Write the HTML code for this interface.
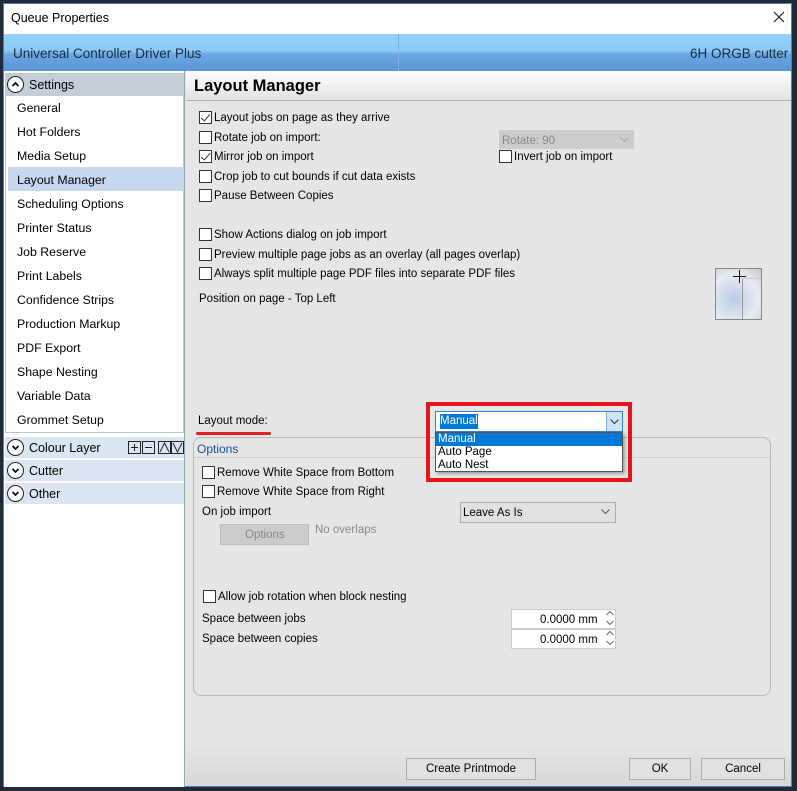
<!DOCTYPE html>
<html><head><meta charset="utf-8"><style>
*{margin:0;padding:0;box-sizing:border-box}
body{width:797px;height:791px;background:#1f2b3a;position:relative;overflow:hidden;font-family:"Liberation Sans",Tahoma,sans-serif;font-size:11.5px;color:#000}
.a{position:absolute}
.cb{position:absolute;width:13px;height:13px;border:1px solid #333;background:#fff}
.cb.c::after{content:"";position:absolute;left:3px;top:0px;width:4px;height:8px;border:solid #333;border-width:0 1.5px 1.5px 0;transform:rotate(40deg)}
.t{position:absolute;white-space:nowrap}
.li{position:absolute;left:17px;font-size:12.3px;white-space:nowrap}
.circ{position:absolute;width:17px;height:17px;border:1.5px solid #222;border-radius:50%;background:#fff}
.circ svg{position:absolute;left:2px;top:2px}
.btn{position:absolute;border:1px solid #adadad;background:#e1e1e1;text-align:center;font-size:11.5px;line-height:20px}
</style></head><body>
<div class="a" style="left:3px;top:3px;width:789px;height:784px;background:#e6e6e6;border:1px solid #5b7ea8"></div>
<div class="a" style="left:4px;top:4px;width:787px;height:30px;background:#fff"></div>
<div class="t" style="left:11px;top:11px;font-size:12.5px">Queue Properties</div>
<svg class="a" style="left:773px;top:11px" width="12" height="12"><path d="M1 1L11 11M11 1L1 11" stroke="#222" stroke-width="1.2"/></svg>
<div class="a" style="left:4px;top:34px;width:787px;height:37px;background:linear-gradient(#94d1fa 0%,#8ccaf5 45%,#6aa8e4 55%,#5b94d6 100%)"></div>
<div class="a" style="left:398px;top:34px;width:1px;height:37px;background:#7fb0e0"></div>
<div class="t" style="left:13px;top:46px;font-size:13.5px;color:#1a2a40">Universal Controller Driver Plus</div>
<div class="t" style="left:690px;top:46px;font-size:13.5px;color:#1a2a40">6H ORGB cutter</div>
<!-- left panel -->
<div class="a" style="left:4px;top:71px;width:181px;height:716px;background:#fff;border-right:1px solid #8aa"></div>
<div class="a" style="left:5px;top:73px;width:179px;height:360px;border:1px solid #b8c6d6;background:#fff"></div>
<div class="a" style="left:6px;top:74px;width:178px;height:22px;background:#c3ced9"></div>
<div class="circ" style="left:7px;top:76px"><svg width="11" height="11"><path d="M2.5 7L5.5 4L8.5 7" stroke="#111" stroke-width="1.8" fill="none"/></svg></div>
<div class="t" style="left:29px;top:78px;font-size:12.5px">Settings</div>
<div class="a" style="left:8px;top:167px;width:176px;height:24px;background:#c6d7ee"></div>
<div class="li" style="top:101px">General</div>
<div class="li" style="top:125px">Hot Folders</div>
<div class="li" style="top:149px">Media Setup</div>
<div class="li" style="top:173px">Layout Manager</div>
<div class="li" style="top:197px">Scheduling Options</div>
<div class="li" style="top:221px">Printer Status</div>
<div class="li" style="top:245px">Job Reserve</div>
<div class="li" style="top:269px">Print Labels</div>
<div class="li" style="top:293px">Confidence Strips</div>
<div class="li" style="top:317px">Production Markup</div>
<div class="li" style="top:341px">PDF Export</div>
<div class="li" style="top:365px">Shape Nesting</div>
<div class="li" style="top:389px">Variable Data</div>
<div class="li" style="top:413px">Grommet Setup</div>
<div class="a" style="left:5px;top:437px;width:179px;height:21px;background:#dae6f3"></div>
<div class="a" style="left:5px;top:460px;width:179px;height:21px;background:#dae6f3"></div>
<div class="a" style="left:5px;top:483px;width:179px;height:21px;background:#dae6f3"></div>
<div class="circ" style="left:7px;top:439px"><svg width="11" height="11"><path d="M2.5 4L5.5 7L8.5 4" stroke="#111" stroke-width="1.8" fill="none"/></svg></div>
<div class="circ" style="left:7px;top:462px"><svg width="11" height="11"><path d="M2.5 4L5.5 7L8.5 4" stroke="#111" stroke-width="1.8" fill="none"/></svg></div>
<div class="circ" style="left:7px;top:485px"><svg width="11" height="11"><path d="M2.5 4L5.5 7L8.5 4" stroke="#111" stroke-width="1.8" fill="none"/></svg></div>
<div class="t" style="left:29px;top:441px;font-size:12.5px">Colour Layer</div>
<div class="t" style="left:29px;top:464px;font-size:12.5px">Cutter</div>
<div class="t" style="left:29px;top:487px;font-size:12.5px">Other</div>
<svg class="a" style="left:128px;top:441px" width="56" height="14"><g fill="none" stroke="#222" stroke-width="1"><rect x="0.5" y="0.5" width="12" height="12"/><path d="M3 6.5H10M6.5 3V10"/><rect x="14.5" y="0.5" width="12" height="12"/><path d="M17 6.5H24"/><rect x="30.5" y="0.5" width="12" height="12"/><path d="M32 11L36.5 2L41 11"/><rect x="43.5" y="0.5" width="12" height="12"/><path d="M45 2L49.5 11L54 2"/></g></svg>
<!-- right -->
<div class="a" style="left:186px;top:71px;width:605px;height:30px;background:linear-gradient(#fff,#e2e2e2);border-bottom:1px solid #b0b0b0"></div>
<div class="t" style="left:194px;top:77px;font-size:16.5px;font-weight:bold">Layout Manager</div>
<div class="cb c" style="left:199px;top:111px"></div><div class="t" style="left:214px;top:112px">Layout jobs on page as they arrive</div>
<div class="cb" style="left:199px;top:131px"></div><div class="t" style="left:214px;top:132px">Rotate job on import:</div>
<div class="cb c" style="left:199px;top:150px"></div><div class="t" style="left:214px;top:151px">Mirror job on import</div>
<div class="cb" style="left:199px;top:170px"></div><div class="t" style="left:214px;top:171px">Crop job to cut bounds if cut data exists</div>
<div class="cb" style="left:199px;top:189px"></div><div class="t" style="left:214px;top:190px">Pause Between Copies</div>
<div class="cb" style="left:199px;top:228px"></div><div class="t" style="left:214px;top:229px">Show Actions dialog on job import</div>
<div class="cb" style="left:199px;top:248px"></div><div class="t" style="left:214px;top:249px">Preview multiple page jobs as an overlay (all pages overlap)</div>
<div class="cb" style="left:199px;top:267px"></div><div class="t" style="left:214px;top:268px">Always split multiple page PDF files into separate PDF files</div>
<div class="t" style="left:199px;top:293px">Position on page - Top Left</div>
<div class="a" style="left:499px;top:130px;width:135px;height:19px;background:#cccccc"></div>
<div class="t" style="left:502px;top:135px;color:#888">Rotate: 90</div>
<svg class="a" style="left:620px;top:137px" width="9" height="6"><path d="M0.5 0.5L4.5 4.5L8.5 0.5" stroke="#aaa" fill="none"/></svg>
<div class="cb" style="left:499px;top:150px"></div><div class="t" style="left:514px;top:151px">Invert job on import</div>
<div class="a" style="left:715px;top:268px;width:47px;height:52px;border:1px solid #888;background:radial-gradient(circle at 40% 60%,#b9cbe6,#e8ecf2 60%,#c8c8c8)"></div>
<div class="a" style="left:742px;top:278px;width:1px;height:41px;background:#999"></div>
<div class="a" style="left:742px;top:278px;width:19px;height:1px;background:#ccc"></div>
<svg class="a" style="left:733px;top:270px" width="13" height="13"><path d="M6.5 0V13M0 6.5H13" stroke="#111"/></svg>
<div class="t" style="left:198px;top:415px">Layout mode:</div>
<div class="a" style="left:196px;top:432px;width:75px;height:3px;background:#e0202a;border-radius:2px"></div>
<!-- options group -->
<div class="a" style="left:193px;top:437px;width:578px;height:259px;border:1px solid #bbb;border-radius:8px"></div>
<div class="a" style="left:194px;top:457px;width:576px;border-top:1px dotted #bbb"></div>
<div class="t" style="left:197px;top:442px;font-size:12px;color:#1d4f91">Options</div>
<div class="cb" style="left:202px;top:466px"></div><div class="t" style="left:217px;top:467px">Remove White Space from Bottom</div>
<div class="cb" style="left:202px;top:485px"></div><div class="t" style="left:217px;top:486px">Remove White Space from Right</div>
<div class="t" style="left:202px;top:506px">On job import</div>
<div class="a" style="left:220px;top:524px;width:89px;height:21px;background:#ccc;border:1px solid #bfbfbf"></div>
<div class="t" style="left:245px;top:529px;color:#888">Options</div>
<div class="t" style="left:315px;top:524px;color:#888">No overlaps</div>
<div class="a" style="left:460px;top:502px;width:156px;height:21px;background:#e1e1e1;border:1px solid #adadad"></div>
<div class="t" style="left:463px;top:507px">Leave As Is</div>
<svg class="a" style="left:601px;top:509px" width="9" height="6"><path d="M0.5 0.5L4.5 4.5L8.5 0.5" stroke="#555" fill="none"/></svg>
<div class="cb" style="left:203px;top:590px"></div><div class="t" style="left:218px;top:591px">Allow job rotation when block nesting</div>
<div class="t" style="left:202px;top:613px">Space between jobs</div>
<div class="t" style="left:202px;top:633px">Space between copies</div>
<div class="a" style="left:511px;top:609px;width:105px;height:20px;background:#fff;border:1px solid #ccc"></div>
<div class="a" style="left:511px;top:629px;width:105px;height:20px;background:#fff;border:1px solid #ccc"></div>
<div class="t" style="left:540px;top:614px">0.0000 mm</div>
<div class="t" style="left:540px;top:634px">0.0000 mm</div>
<svg class="a" style="left:605px;top:610px" width="10" height="38"><g stroke="#666" fill="none"><path d="M1.5 5L5 1.5L8.5 5M1.5 11L5 14.5L8.5 11M1.5 25L5 21.5L8.5 25M1.5 31L5 34.5L8.5 31"/></g></svg>
<!-- combo + dropdown -->
<div class="a" style="left:426px;top:402px;width:206px;height:80px;border:4px solid #e3161f"></div>
<div class="a" style="left:435px;top:411px;width:188px;height:21px;background:#fff;border:1px solid #3c7fc5"></div>
<div class="a" style="left:606px;top:412px;width:16px;height:19px;background:#cce4f7;border-left:1px solid #7eb4ea"></div>
<svg class="a" style="left:610px;top:419px" width="9" height="6"><path d="M0.5 0.5L4.5 4.5L8.5 0.5" stroke="#333" fill="none"/></svg>
<div class="a" style="left:440px;top:414px;width:38px;height:15px;background:#0078d7"></div>
<div class="t" style="left:440px;top:415px;color:#fff">Manual</div>
<div class="a" style="left:435px;top:432px;width:188px;height:40px;background:#fff;border:1px solid #555;box-shadow:2px 2px 3px rgba(0,0,0,.3)"></div>
<div class="a" style="left:436px;top:433px;width:186px;height:13px;background:#0078d7"></div>
<div class="t" style="left:438px;top:433px;color:#fff">Manual</div>
<div class="t" style="left:438px;top:446px">Auto Page</div>
<div class="t" style="left:438px;top:459px">Auto Nest</div>
<!-- bottom -->
<div class="a" style="left:186px;top:745px;width:605px;height:41px;background:linear-gradient(#e6e6e6,#d8d8d8)"></div>
<div class="btn" style="left:406px;top:758px;width:130px;height:22px">Create Printmode</div>
<div class="btn" style="left:629px;top:758px;width:62px;height:22px">OK</div>
<div class="btn" style="left:701px;top:758px;width:84px;height:22px">Cancel</div>
</body></html>
